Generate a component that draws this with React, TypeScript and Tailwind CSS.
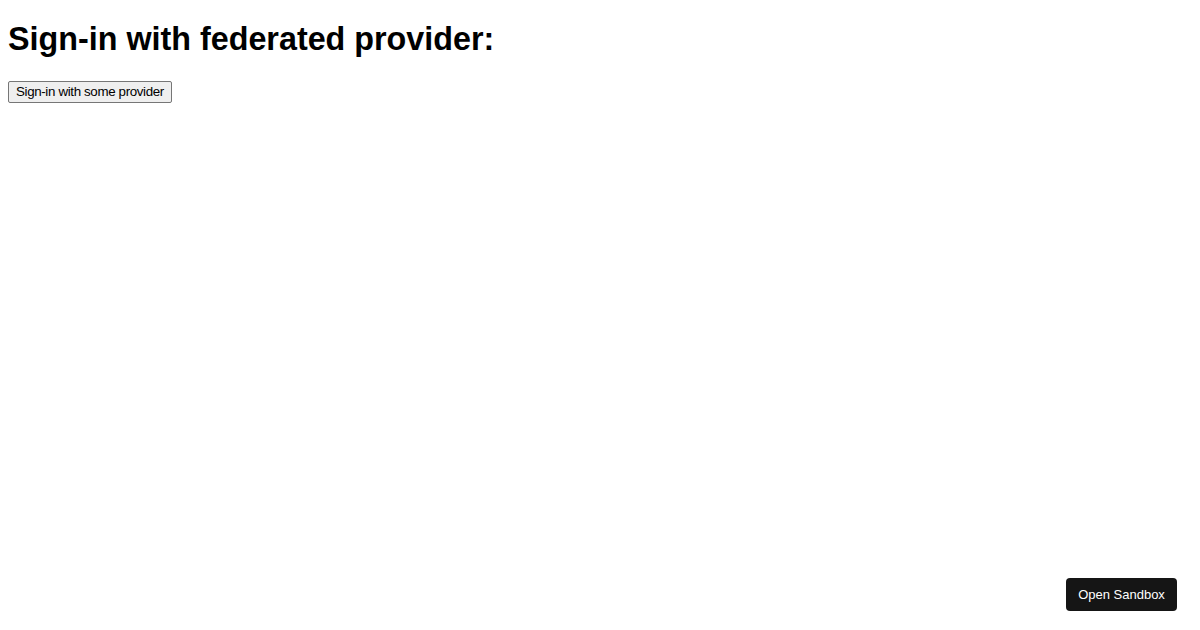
export default function App() {
   return (
      <div className="min-h-screen bg-white px-2 pt-px font-['Liberation_Sans',Arial,sans-serif] text-black">
         <h1 className="mt-[20.44px] mb-[20.44px] text-[32.3px] leading-[36.8px] font-bold">Sign-in with federated provider:</h1>
         <button
            type="button"
            className="rounded-[2px] border border-[#767676] bg-[#efefef] px-[7px] py-[2px] text-[13.33px] leading-[16px] tracking-[-0.35px] text-black"
         >
            Sign-in with some provider
         </button>

         <button
            type="button"
            className="fixed right-[23px] bottom-[19px] flex h-[33px] w-[111px] items-center justify-center rounded-[4px] bg-[#151515] text-[13px] text-white"
         >
            Open Sandbox
         </button>
      </div>
   );
}
